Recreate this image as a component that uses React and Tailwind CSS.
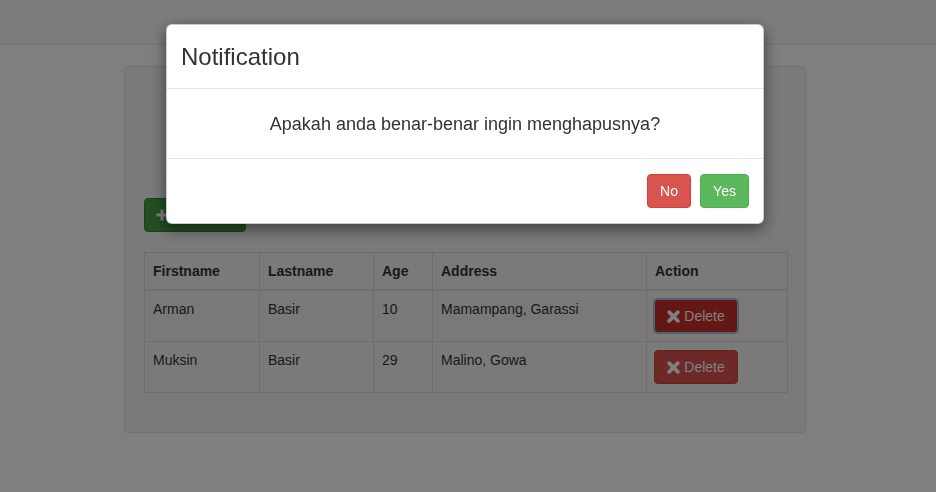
import React from "react";

const font = { fontFamily: '"Liberation Sans", Arial, Helvetica, sans-serif' };

function XIcon({ className = "" }) {
  return (
    <svg viewBox="0 0 12 12" className={className} aria-hidden="true">
      <path d="M2 2 L10 10 M10 2 L2 10" stroke="currentColor" strokeWidth="3.4" strokeLinecap="round" />
    </svg>
  );
}

function PlusIcon({ className = "" }) {
  return (
    <svg viewBox="0 0 12 12" className={className} aria-hidden="true">
      <path d="M6 0.5 V11.5 M0.5 6 H11.5" stroke="currentColor" strokeWidth="3" />
    </svg>
  );
}

function DeleteButton({ focused }) {
  return (
    <button
      className={
        "flex h-[34px] w-[84px] items-center justify-center gap-[4px] rounded border text-sm text-white " +
        (focused
          ? "border-[#ac2925] bg-[#c9302c] outline-2 -outline-offset-1 outline-[#9fc1ea]"
          : "border-[#d43f3a] bg-[#d9534f]")
      }
    >
      <XIcon className="h-[13px] w-[13px]" />
      <span>Delete</span>
    </button>
  );
}

const rows = [
  { first: "Arman", last: "Basir", age: "10", address: "Mamampang, Garassi", focused: true },
  { first: "Muksin", last: "Basir", age: "29", address: "Malino, Gowa", focused: false },
];

export default function App() {
  return (
    <div className="relative h-screen w-full overflow-hidden bg-white text-sm text-[#333]" style={font}>
      {/* navbar */}
      <div className="h-[45px] border-b border-[#e7e7e7] bg-[#f8f8f8]" />

      {/* well */}
      <div className="ml-[124px] mt-[21px] w-[682px] rounded border border-[#e3e3e3] bg-[#f5f5f5] p-[19px]">
        <div className="h-[72px]" />
        <div className="mt-5 border-t border-[#eee]" />
        <button className="mt-[19px] flex h-[34px] w-[102px] items-center gap-[5px] rounded border border-[#398439] bg-[#449d44] px-[11px] text-sm text-white">
          <PlusIcon className="h-[12px] w-[12px]" />
          <span>Tambah</span>
        </button>
        <table className="mb-5 mt-5 w-[643px] table-fixed border-collapse border border-[#ddd]">
          <colgroup>
            <col className="w-[115px]" />
            <col className="w-[114px]" />
            <col className="w-[59px]" />
            <col className="w-[214px]" />
            <col className="w-[141px]" />
          </colgroup>
          <thead>
            <tr>
              {["Firstname", "Lastname", "Age", "Address", "Action"].map((h) => (
                <th key={h} className="border border-b-2 border-[#ddd] p-2 text-left align-bottom font-bold leading-5">
                  {h}
                </th>
              ))}
            </tr>
          </thead>
          <tbody>
            {rows.map((r, i) => (
              <tr key={r.first} className={i === 0 ? "bg-[#f2f2f2]" : ""}>
                <td className="border border-[#ddd] p-2 align-top leading-5">{r.first}</td>
                <td className="border border-[#ddd] p-2 align-top leading-5">{r.last}</td>
                <td className="border border-[#ddd] p-2 align-top leading-5">{r.age}</td>
                <td className="border border-[#ddd] p-2 align-top leading-5">{r.address}</td>
                <td className="border border-[#ddd] p-2 pl-[7px] align-top leading-5">
                  <DeleteButton focused={r.focused} />
                </td>
              </tr>
            ))}
          </tbody>
        </table>
      </div>

      {/* backdrop */}
      <div className="fixed inset-0 bg-black/50" />

      {/* modal */}
      <div className="fixed left-[166px] top-[24px] w-[598px] rounded-md border border-black/20 bg-white shadow-[0_5px_15px_rgba(0,0,0,0.5)]">
        <div className="border-b border-[#e5e5e5] px-[14px] py-[15px]">
          <h4 className="text-2xl leading-[33px] text-[#333]">Notification</h4>
        </div>
        <div className="pb-[21px] pt-[23px] text-center text-lg leading-[25px] text-[#333]">
          Apakah anda benar-benar ingin menghapusnya?
        </div>
        <div className="flex justify-end gap-[9px] border-t border-[#e5e5e5] p-[15px] pr-[14px]">
          <button className="h-[34px] w-[44px] rounded border border-[#d43f3a] bg-[#d9534f] text-sm text-white">
            No
          </button>
          <button className="h-[34px] w-[49px] rounded border border-[#4cae4c] bg-[#5cb85c] text-sm text-white">
            Yes
          </button>
        </div>
      </div>
    </div>
  );
}
